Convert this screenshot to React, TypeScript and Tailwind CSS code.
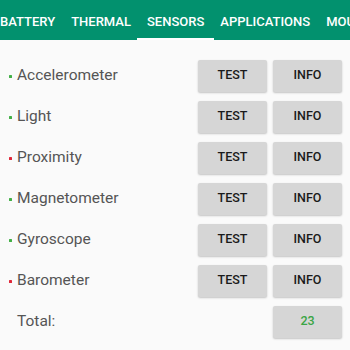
import React from "react";

const tabs = ["BATTERY", "THERMAL", "SENSORS", "APPLICATIONS", "MOUNTS"];
const sensors: [string, boolean][] = [
  ["Accelerometer", true],
  ["Light", true],
  ["Proximity", false],
  ["Magnetometer", true],
  ["Gyroscope", true],
  ["Barometer", false],
];

function Btn({ children, className = "" }: { children: React.ReactNode; className?: string }) {
  return (
    <div
      className={`w-[69px] h-[32px] rounded-[2px] bg-[#d6d6d6] shadow-[0_1px_2px_rgba(0,0,0,0.22)] flex items-center justify-center text-[12.5px] ${className}`}
    >
      {children}
    </div>
  );
}

export default function App() {
  return (
    <div
      className="w-[350px] h-[350px] overflow-hidden bg-[#fafafa]"
      style={{ fontFamily: "Roboto, 'Liberation Sans', sans-serif" }}
    >
      <div className="h-[40px] bg-[#02916e] flex items-stretch overflow-hidden whitespace-nowrap">
        <div className="flex items-stretch ml-[-8px]">
          {tabs.map((t) => (
            <div
              key={t}
              className="relative px-[8px] pt-[3px] flex items-center text-[13px] font-medium text-white"
            >
              {t}
              {t === "SENSORS" && (
                <div className="absolute left-[-2px] right-[-2px] bottom-0 h-[2px] bg-white" />
              )}
            </div>
          ))}
        </div>
      </div>
      <div className="pt-[15px]">
        {sensors.map(([name, ok]) => (
          <div key={name} className="h-[41px] flex items-center pr-[8px]">
            <div className="flex items-center flex-1 pl-[9px]">
              <span
                className={`w-[3px] h-[3px] rounded-[0.5px] mr-[5px] mt-[2px] ${ok ? "bg-[#43b047]" : "bg-[#e0283a]"}`}
              />
              <span className="text-[15.5px] text-[#555555]">{name}</span>
            </div>
            <div className="flex gap-[6px]">
              <Btn className="font-medium text-[#1a1a1a]">TEST</Btn>
              <Btn className="font-medium text-[#1a1a1a]">INFO</Btn>
            </div>
          </div>
        ))}
        <div className="h-[41px] flex items-center pr-[8px]">
          <div className="flex-1 pl-[17px] text-[15.5px] text-[#555555]">Total:</div>
          <Btn className="font-medium text-[#3aa544]">23</Btn>
        </div>
      </div>
    </div>
  );
}
